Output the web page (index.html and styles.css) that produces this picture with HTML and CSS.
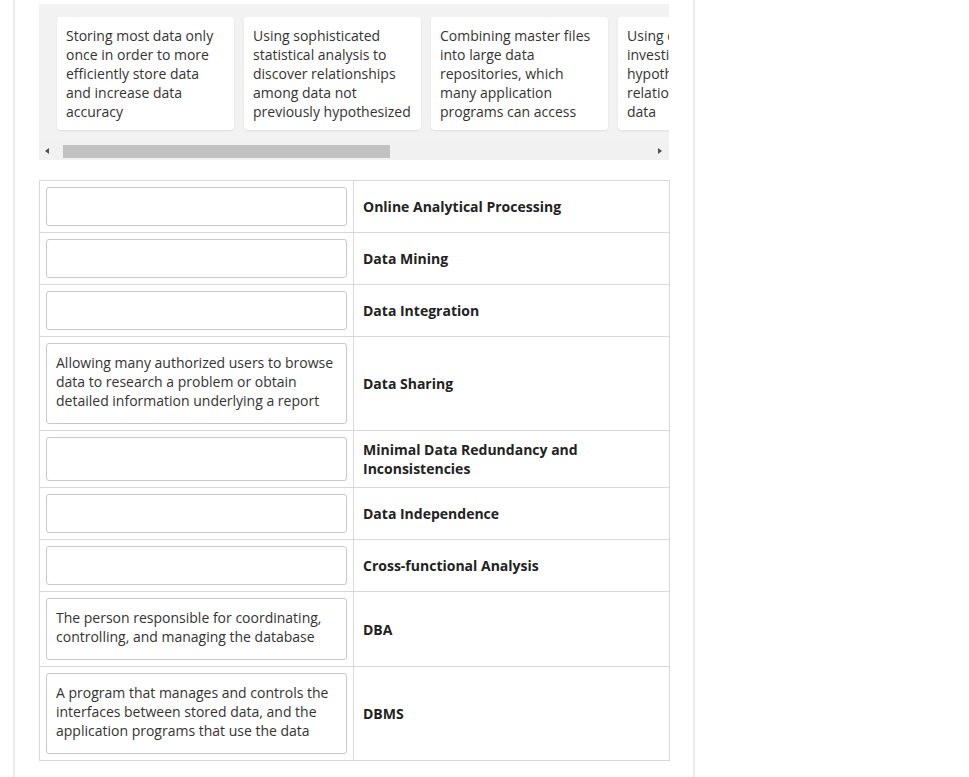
FILE: index.html
```html
<!DOCTYPE html>
<html>
<head>
	<meta charset="utf-8">
	<title>Matching</title>
	<link rel="stylesheet" href="styles.css">
</head>
<body>
	<div class="panel">
		<div class="bank">
			<div class="cards">
				<div class="card">Storing most data only once in order to more efficiently store data and increase data accuracy</div>
				<div class="card">Using sophisticated statistical analysis to discover relationships among data not previously hypothesized</div>
				<div class="card">Combining master files into large data repositories, which many application programs can access</div>
				<div class="card">Using queries to investigate hypothesized relationships among data</div>
				<div class="card">Separating data descriptions from the application programs that use the data</div>
				<div class="card">Combining data to answer questions across departments</div>
			</div>
			<div class="track">
				<span class="arrow left"></span>
				<div class="rail"><div class="thumb"></div></div>
				<span class="arrow right"></span>
			</div>
		</div>

		<div class="match">
			<div class="drop"><div class="box"></div></div>
			<div class="term">Online Analytical Processing</div>

			<div class="drop"><div class="box"></div></div>
			<div class="term">Data Mining</div>

			<div class="drop"><div class="box"></div></div>
			<div class="term">Data Integration</div>

			<div class="drop"><div class="box">Allowing many authorized users to browse data to research a problem or obtain detailed information underlying a report</div></div>
			<div class="term">Data Sharing</div>

			<div class="drop"><div class="box"></div></div>
			<div class="term">Minimal Data Redundancy and Inconsistencies</div>

			<div class="drop"><div class="box"></div></div>
			<div class="term">Data Independence</div>

			<div class="drop"><div class="box"></div></div>
			<div class="term">Cross-functional Analysis</div>

			<div class="drop"><div class="box">The person responsible for coordinating, controlling, and managing the database</div></div>
			<div class="term">DBA</div>

			<div class="drop"><div class="box">A program that manages and controls the interfaces between stored data, and the application programs that use the data</div></div>
			<div class="term">DBMS</div>
		</div>
	</div>
</body>
</html>
```

FILE: styles.css
```css
html,body{margin: 0;padding: 0;height: 100%;background-color: #fff}
body{
	font-family: "Open Sans", "Liberation Sans", sans-serif;
	font-size: 14px;
	line-height: 19px;
	color: #333;
}
.panel{
	box-sizing: border-box;
	width: 682px;
	min-height: 100%;
	margin-left: 13px;
	padding: 4px 24px 16px 24px;
	border-left: 2px solid #ebebeb;
	border-right: 2px solid #ebebeb;
}
.bank{
	width: 630px;
	background-color: #f2f2f2;
	overflow: hidden;
}
.cards{
	display: flex;
	gap: 10px;
	padding: 13px 18px 12px 18px;
}
.card{
	flex: 0 0 177px;
	box-sizing: border-box;
	height: 113px;
	padding: 9px 9px;
	background-color: #fff;
	border-radius: 4px;
	box-shadow: 0 1px 2px rgba(0,0,0,0.08);
	overflow: hidden;
}
.track{
	display: flex;
	align-items: center;
	height: 18px;
	background-color: #f1f1f1;
}
.rail{
	flex: 1;
	height: 13px;
}
.thumb{
	width: 327px;
	height: 13px;
	margin-left: 7px;
	background-color: #c1c1c1;
}
.arrow{
	width: 17px;
	height: 18px;
	position: relative;
}
.arrow::after{
	content: "";
	position: absolute;
	top: 6px;
	border-top: 3.5px solid transparent;
	border-bottom: 3.5px solid transparent;
}
.arrow.left::after{
	left: 6px;
	border-right: 4px solid #505050;
}
.arrow.right::after{
	left: 6px;
	border-left: 4px solid #505050;
}
.match{
	display: grid;
	grid-template-columns: 314px 1fr;
	width: 630px;
	margin-top: 20px;
	border-top: 1px solid #d8d8d8;
	border-left: 1px solid #d8d8d8;
}
.drop,.term{
	border-right: 1px solid #d8d8d8;
	border-bottom: 1px solid #d8d8d8;
}
.drop{
	display: flex;
	padding: 6px;
}
.box{
	flex: 1;
	box-sizing: border-box;
	min-height: 39px;
	padding: 9px 9px 13px 9px;
	border: 1px solid #c9c9c9;
	border-radius: 3px;
	background-color: #fff;
}
.term{
	display: flex;
	align-items: center;
	padding: 9px 9px;
	font-weight: bold;
	color: #222;
}
```
